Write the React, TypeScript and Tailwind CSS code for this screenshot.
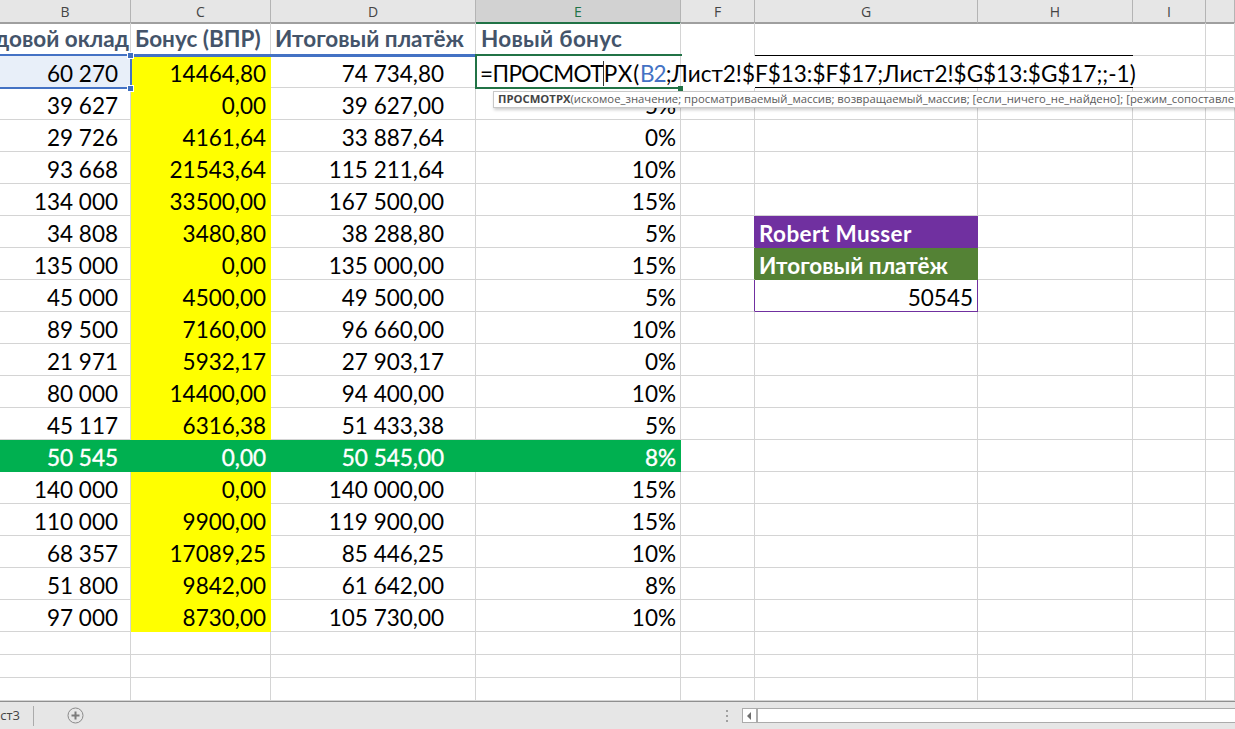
import React from 'react';

const GRID = 'grid grid-cols-[131px_140px_205px_205px_74px_223px_155px_73px_29px]';
const LINE = 'border-r border-b border-[#d4d4d4]';
const NONE = 'border-r border-b border-transparent';

const rows = [
  ['60 270', '14464,80', '74 734,80', ''],
  ['39 627', '0,00', '39 627,00', '5%'],
  ['29 726', '4161,64', '33 887,64', '0%'],
  ['93 668', '21543,64', '115 211,64', '10%'],
  ['134 000', '33500,00', '167 500,00', '15%'],
  ['34 808', '3480,80', '38 288,80', '5%'],
  ['135 000', '0,00', '135 000,00', '15%'],
  ['45 000', '4500,00', '49 500,00', '5%'],
  ['89 500', '7160,00', '96 660,00', '10%'],
  ['21 971', '5932,17', '27 903,17', '0%'],
  ['80 000', '14400,00', '94 400,00', '10%'],
  ['45 117', '6316,38', '51 433,38', '5%'],
  ['50 545', '0,00', '50 545,00', '8%'],
  ['140 000', '0,00', '140 000,00', '15%'],
  ['110 000', '9900,00', '119 900,00', '15%'],
  ['68 357', '17089,25', '85 446,25', '10%'],
  ['51 800', '9842,00', '61 642,00', '8%'],
  ['97 000', '8730,00', '105 730,00', '10%']
];

const headers = ['B', 'C', 'D', 'E', 'F', 'G', 'H', 'I', ''];

const Cell: React.FC<{ className?: string; children?: React.ReactNode }> = ({ className, children }) => (
  <div className={`flex items-center overflow-hidden whitespace-nowrap ${className ?? ''}`}>{children}</div>
);

const TitleCell: React.FC<{ children: React.ReactNode; className?: string }> = ({ children, className }) => (
  <Cell className={`${LINE} font-bold text-[#44546a] ${className ?? 'pl-[4px]'}`}>{children}</Cell>
);

const DataRow: React.FC<{ row: string[]; index: number }> = ({ row, index }) => {
  const highlighted = row[0] === '50 545';
  const green = `${NONE} bg-[#00b050] text-white [-webkit-text-stroke:0.4px_white]`;
  const plain = highlighted ? green : LINE;
  const blackLine = 'border-b border-black';

  // the purple and green block also paints over the gridline on its left
  const leftOfBlock =
    index === 0
      ? NONE
      : index === 5 || index === 7
        ? 'border-r border-b border-[#d4d4d4] border-r-[#7030a0]'
        : index === 6
          ? 'border-r border-b border-[#d4d4d4] border-r-[#548235]'
          : LINE;

  return (
    <div className={`${GRID} h-[32px]`}>
      <Cell className={`${plain} justify-end pr-[12px] pt-[4px] ${index === 0 ? 'bg-[#e8eff9]' : ''}`}>{row[0]}</Cell>
      <Cell className={`justify-end pr-[4px] pt-[4px] ${highlighted ? green : `${NONE} bg-[#ffff00]`}`}>{row[1]}</Cell>
      <Cell className={`${plain} justify-end pr-[31px] pt-[4px]`}>{row[2]}</Cell>
      <Cell className={`${plain} justify-end pr-[4px] pt-[4px]`}>{row[3]}</Cell>
      <Cell className={leftOfBlock} />
      {index === 5 ? (
        <Cell className={`${NONE} bg-[#7030a0] pl-[4px] pt-[4px] font-bold tracking-[0.4px] text-white`}>Robert Musser</Cell>
      ) : index === 6 ? (
        <Cell className={`${NONE} bg-[#548235] pl-[4px] pt-[4px] font-bold text-white`}>Итоговый платёж</Cell>
      ) : index === 7 ? (
        <Cell className="justify-end border-r border-b border-[#7030a0] pr-[4px] pt-[4px]">50545</Cell>
      ) : (
        <Cell className={index === 0 ? blackLine : LINE} />
      )}
      <Cell className={index === 0 ? blackLine : LINE} />
      <Cell className={LINE} />
      <Cell className={LINE} />
    </div>
  );
};

const EmptyRow: React.FC = () => (
  <div className={`${GRID} h-[23px]`}>
    {headers.map((_, i) => (
      <Cell key={i} className={LINE} />
    ))}
  </div>
);

export default function App() {
  return (
    <div className="relative flex h-[729px] w-[1235px] flex-col overflow-hidden bg-white font-['Lato','Carlito','Open_Sans',sans-serif] text-[22.5px] text-black">
      {/* column letters */}
      <div className={`${GRID} h-[23px] font-['Open_Sans',sans-serif] text-[14px] text-[#444444]`}>
        {headers.map((h, i) => (
          <div
            key={i}
            className={`flex items-center justify-center border-r border-[#b4b4b4] pt-px ${
              h === 'E'
                ? 'border-b-2 border-b-[#217346] bg-[#d2d2d2] text-[#217346]'
                : 'border-b-2 border-b-[#9f9f9f] bg-[#e6e6e6]'
            }`}
          >
            {h}
          </div>
        ))}
      </div>

      {/* title row */}
      <div className={`${GRID} h-[33px]`}>
        <TitleCell className="justify-end pr-px">Годовой оклад</TitleCell>
        <TitleCell>Бонус (ВПР)</TitleCell>
        <TitleCell>Итоговый платёж</TitleCell>
        <TitleCell className="pl-[5px] tracking-[0.3px]">Новый бонус</TitleCell>
        <Cell className="border-r border-[#d4d4d4]" />
        <Cell className="border-b border-black" />
        <Cell className="border-b border-black" />
        <Cell className={LINE} />
        <Cell className={LINE} />
      </div>

      {rows.map((row, i) => (
        <DataRow key={row[0]} row={row} index={i} />
      ))}
      <EmptyRow />
      <EmptyRow />
      <EmptyRow />

      {/* sheet tabs and scrollbar */}
      <div className="flex h-[28px] items-center border-t border-[#8f8f8f] bg-[#e6e6e6] font-['Open_Sans',sans-serif] text-[13px] text-[#444444]">
        <div className="flex w-[33px] justify-end overflow-hidden pr-[13px] whitespace-nowrap">Лист3</div>
        <div className="h-[20px] w-px bg-[#ababab]" />
        <svg className="ml-[33px]" width="17" height="17" viewBox="0 0 17 17" fill="none">
          <circle cx="8.5" cy="8.5" r="7.5" stroke="#8a8a8a" />
          <path d="M8.5 4.5v8M4.5 8.5h8" stroke="#7a7a7a" strokeWidth="2" />
        </svg>
        <div className="ml-[642px] flex h-[12px] w-[3px] flex-col justify-between">
          <span className="h-[2px] w-[2px] bg-[#a0a0a0]" />
          <span className="h-[2px] w-[2px] bg-[#a0a0a0]" />
          <span className="h-[2px] w-[2px] bg-[#a0a0a0]" />
        </div>
        <div className="ml-[13px] flex h-[15px] flex-1 border border-r-0 border-[#ababab] bg-white">
          <div className="flex w-[15px] items-center justify-center border-r-2 border-[#ababab]">
            <svg width="5" height="8" viewBox="0 0 5 8">
              <path d="M4 0v8L0 4z" fill="#6e6e6e" />
            </svg>
          </div>
        </div>
      </div>

      {/* selected range */}
      <div className="absolute left-[-3px] top-[54px] h-[35px] w-[135px] border-2 border-[#4472c4]" />
      <div className="absolute left-[131px] top-[54px] h-[3px] w-[344px] bg-[#4472c4]" />
      <div className="absolute left-[127px] top-[52px] h-[7px] w-[7px] border border-white bg-[#3f6fc0]" />
      <div className="absolute left-[127px] top-[85px] h-[7px] w-[7px] border border-white bg-[#3f6fc0]" />

      {/* cell being edited */}
      <div className="absolute left-[475px] top-[54px] flex h-[35px] w-[207px] items-center whitespace-nowrap border-2 border-r-0 border-[#217346] pl-[3px] pt-[4px]">
        <span className="tracking-[-0.6px]">=ПРОСМОТ</span>
        <span className="h-[25px] w-px shrink-0 bg-[#333333]" />
        <span className="tracking-[0.8px]">РХ(</span>
        <span className="tracking-[-1px] text-[#4472c4]">B2</span>
        <span>;Лист2!$F$13:$F$17;Лист2!$G$13:$G$17;;-1)</span>
      </div>
      <div className="absolute left-[678px] top-[86px] h-[5px] w-[5px] bg-[#217346]" />

      {/* function hint */}
      <div className="absolute left-[493px] top-[91px] flex h-[17px] w-[760px] items-center whitespace-nowrap border border-[#c8c8c8] bg-white pl-[4px] font-['Open_Sans',sans-serif] text-[11.3px] text-[#5a5a5a] shadow-[1px_2px_3px_rgba(0,0,0,0.2)]">
        <b className="text-[#444444]">ПРОСМОТРХ</b>
        (искомое_значение; просматриваемый_массив; возвращаемый_массив; [если_ничего_не_найдено]; [режим_сопоставления]
      </div>
    </div>
  );
}
